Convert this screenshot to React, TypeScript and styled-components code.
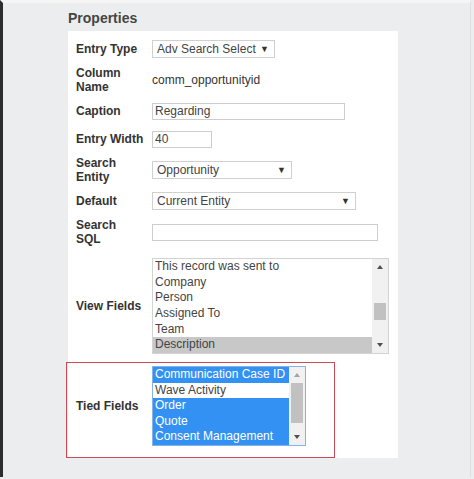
import styled, { createGlobalStyle } from 'styled-components';

const GlobalStyle = createGlobalStyle`
    html, body {
        margin: 0;
        padding: 0;
        background: #ecedef;
    }
    * {
        box-sizing: border-box;
    }
`

const Frame = styled.div`
    width: 471px;
    height: 477px;
    border-left: 3px solid #2d2d2d;
    border-top: 3px solid #f5f5f6;
    border-right: 1px solid #dddee1;
    padding: 7px 0 0 65px;
    font-family: "Liberation Sans", Arial, sans-serif;
    background: #ecedef;
`

const Heading = styled.h2`
    margin: 0 0 5px 0;
    font-size: 14px;
    line-height: 16px;
    font-weight: bold;
    color: #454545;
`

const Panel = styled.div`
    width: 330px;
    background: #fff;
    padding-top: 4px;
    padding-bottom: 0;
`

const Row = styled.div<{ $h: number }>`
    display: flex;
    align-items: center;
    height: ${({ $h }) => $h}px;
    padding-left: 8px;
`

const Label = styled.div`
    width: 76px;
    flex-shrink: 0;
    font-size: 12px;
    line-height: 14px;
    font-weight: bold;
    color: #333;
`

const Value = styled.div`
    font-size: 12px;
    color: #333;
`

const SelectBox = styled.div<{ $w: number }>`
    width: ${({ $w }) => $w}px;
    height: 18px;
    border: 1px solid #d0d0d0;
    background: #fff;
    display: flex;
    align-items: center;
    justify-content: space-between;
    padding: 0 5px 0 4px;
    font-size: 12px;
    color: #444;
`

const Arrow = styled.span`
    font-size: 9px;
    color: #333;
`

const TextInput = styled.input<{ $w: number }>`
    width: ${({ $w }) => $w}px;
    height: 17px;
    border: 1px solid #cdcdcd;
    padding: 0 2px;
    margin: 0;
    font-family: "Liberation Sans", Arial, sans-serif;
    font-size: 12px;
    color: #444;
    outline: none;
`

const ListBox = styled.div<{ $w: number; $focus?: boolean }>`
    width: ${({ $w }) => $w}px;
    display: flex;
    border: 1px solid ${({ $focus }) => ($focus ? '#86b3e6' : '#d3d3d3')};
    background: #fff;
`

const Items = styled.div`
    flex: 1;
    display: flex;
    flex-direction: column;
`

const Item = styled.div<{ $sel?: 'gray' | 'blue' }>`
    height: 15.6px;
    line-height: 15.6px;
    padding-left: 2px;
    font-size: 12px;
    white-space: nowrap;
    overflow: hidden;
    color: ${({ $sel }) => ($sel === 'blue' ? '#fff' : '#444')};
    background: ${({ $sel }) =>
        $sel === 'blue' ? '#3391f3' : $sel === 'gray' ? '#c8c8c8' : 'transparent'};
`

const ScrollBar = styled.div`
    width: 16px;
    flex-shrink: 0;
    display: flex;
    flex-direction: column;
    background: #f1f1f1;
`

const ScrollBtn = styled.div`
    height: 16px;
    flex-shrink: 0;
    display: flex;
    align-items: center;
    justify-content: center;
`

const TriUp = styled.span<{ $dim?: boolean }>`
    width: 0;
    height: 0;
    border-left: 3.5px solid transparent;
    border-right: 3.5px solid transparent;
    border-bottom: 4px solid ${({ $dim }) => ($dim ? '#a3a3a3' : '#505050')};
`

const TriDown = styled.span`
    width: 0;
    height: 0;
    border-left: 3.5px solid transparent;
    border-right: 3.5px solid transparent;
    border-top: 4px solid #505050;
`

const Track = styled.div`
    flex: 1;
    padding: 0 2px;
`

const Thumb = styled.div<{ $top: number; $h: number }>`
    margin-top: ${({ $top }) => $top}px;
    height: ${({ $h }) => $h}px;
    background: #c1c1c1;
`

const Highlight = styled.div`
    width: 269px;
    margin: -1px 0 -2px -2px;
    border: 1px solid #cc4b55;
    padding: 3px 0 11px 9px;
    display: flex;
    align-items: center;
`

type Sel = 'gray' | 'blue' | undefined

const viewFields: [string, Sel][] = [
    ['This record was sent to', undefined],
    ['Company', undefined],
    ['Person', undefined],
    ['Assigned To', undefined],
    ['Team', undefined],
    ['Description', 'gray'],
]

const tiedFields: [string, Sel][] = [
    ['Communication Case ID', 'blue'],
    ['Wave Activity', undefined],
    ['Order', 'blue'],
    ['Quote', 'blue'],
    ['Consent Management', 'blue'],
]

const List = ({ w, items, focus, thumbTop, thumbH, topDim }: {
    w: number; items: [string, Sel][]; focus?: boolean; thumbTop: number; thumbH: number; topDim?: boolean
}) => (
    <ListBox $w={w} $focus={focus}>
        <Items>
            {items.map(([text, sel]) => (
                <Item key={text} $sel={sel}>{text}</Item>
            ))}
        </Items>
        <ScrollBar>
            <ScrollBtn><TriUp $dim={topDim} /></ScrollBtn>
            <Track><Thumb $top={thumbTop} $h={thumbH} /></Track>
            <ScrollBtn><TriDown /></ScrollBtn>
        </ScrollBar>
    </ListBox>
)

export default function App() {
    return (
        <>
            <GlobalStyle />
            <Frame>
                <Heading>Properties</Heading>
                <Panel>
                    <Row $h={28}>
                        <Label>Entry Type</Label>
                        <SelectBox $w={123}>Adv Search Select <Arrow>▼</Arrow></SelectBox>
                    </Row>
                    <Row $h={34}>
                        <Label>Column<br />Name</Label>
                        <Value>comm_opportunityid</Value>
                    </Row>
                    <Row $h={28}>
                        <Label>Caption</Label>
                        <TextInput $w={193} defaultValue="Regarding" readOnly />
                    </Row>
                    <Row $h={28}>
                        <Label>Entry Width</Label>
                        <TextInput $w={60} defaultValue="40" readOnly />
                    </Row>
                    <Row $h={34}>
                        <Label>Search<br />Entity</Label>
                        <SelectBox $w={140}>Opportunity <Arrow>▼</Arrow></SelectBox>
                    </Row>
                    <Row $h={28}>
                        <Label>Default</Label>
                        <SelectBox $w={204}>Current Entity <Arrow>▼</Arrow></SelectBox>
                    </Row>
                    <Row $h={34}>
                        <Label>Search<br />SQL</Label>
                        <TextInput $w={226} defaultValue="" readOnly />
                    </Row>
                    <Row $h={114}>
                        <Label>View Fields</Label>
                        <List w={237} items={viewFields} thumbTop={28} thumbH={17} />
                    </Row>
                    <Highlight>
                        <Label>Tied Fields</Label>
                        <List w={154} items={tiedFields} focus thumbTop={0} thumbH={40} topDim />
                    </Highlight>
                </Panel>
            </Frame>
        </>
    )
}
